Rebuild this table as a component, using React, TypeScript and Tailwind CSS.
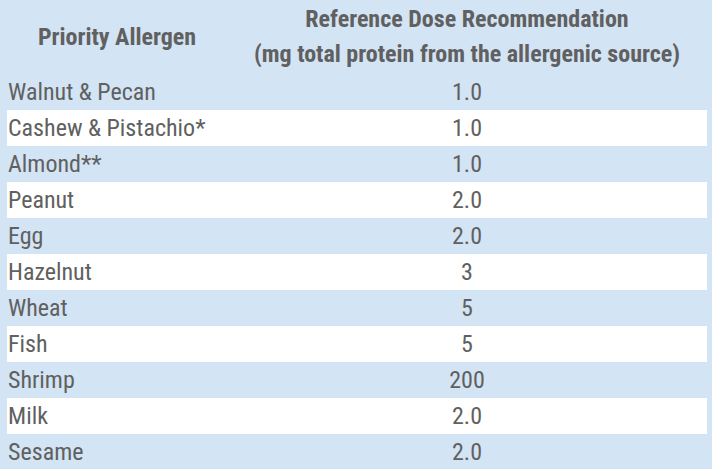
const rows: [string, string][] = [
  ["Walnut & Pecan", "1.0"],
  ["Cashew & Pistachio*", "1.0"],
  ["Almond**", "1.0"],
  ["Peanut", "2.0"],
  ["Egg", "2.0"],
  ["Hazelnut", "3"],
  ["Wheat", "5"],
  ["Fish", "5"],
  ["Shrimp", "200"],
  ["Milk", "2.0"],
  ["Sesame", "2.0"],
];

export default function App() {
  return (
    <div className="h-[469px] w-[712px] overflow-hidden bg-[#d3e4f4] pl-[7px] pr-[5px] font-['Roboto_Condensed',sans-serif] text-[24px] text-[#606060]">
      <div className="grid h-[74px] grid-cols-[220px_1fr] items-center font-bold">
        <div className="text-center">Priority Allergen</div>
        <div className="text-center leading-[35px]">
          <div>Reference Dose Recommendation</div>
          <div>(mg total protein from the allergenic source)</div>
        </div>
      </div>
      {rows.map(([name, dose], i) => (
        <div
          key={name}
          className={`grid h-[36px] grid-cols-[220px_1fr] items-center leading-[36px] ${i % 2 === 1 ? "bg-white" : ""}`}
        >
          <div className="pl-px">{name}</div>
          <div className="text-center">{dose}</div>
        </div>
      ))}
    </div>
  );
}
